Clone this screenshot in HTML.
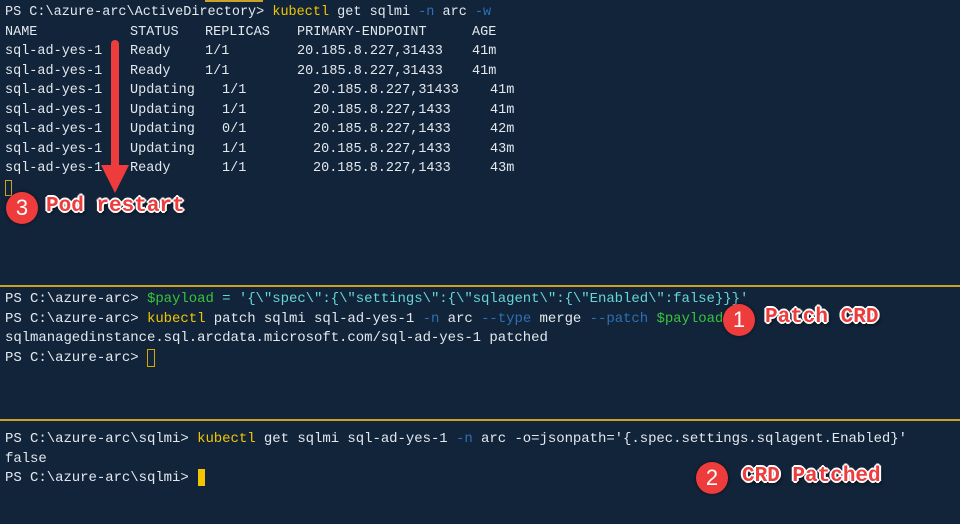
<!DOCTYPE html>
<html><head><style>
body{margin:0;width:960px;height:524px;background:#12243a;overflow:hidden;position:relative;font-family:"Liberation Mono",monospace;color:#e3e8ee}
.r{position:absolute;left:0;height:19.5px;font-size:13.5px;line-height:19.5px;white-space:pre}
.r span{position:absolute;top:0}
.b{position:absolute;left:5px;white-space:pre;font-size:14px;line-height:19.5px;letter-spacing:-0.05px}
.y{color:#f2c500}.f{color:#2f6fb4}.s{color:#63d6d6}.g{color:#38c43b}
.hl{position:absolute;left:0;width:960px;height:2px;background:#c9a227}
.c{position:absolute;width:32px;height:32px;border-radius:50%;background:#ee3b3b;color:#fff;font:22px/32px "Liberation Sans",sans-serif;text-align:center;box-shadow:0 0 3px rgba(0,0,0,.6)}
.a{position:absolute;color:#ee3b3b;font:bold 21px "Liberation Mono",monospace;white-space:pre;text-shadow:-1px -1px 0 #fff,1px -1px 0 #fff,-1px 1px 0 #fff,1px 1px 0 #fff,0 2px 0 #fff,2px 0 0 #fff,-2px 0 0 #fff,0 -2px 0 #fff,2px 3px 3px rgba(0,0,0,.6)}
</style></head><body>
<div style="position:absolute;left:205px;top:0;width:58px;height:2px;background:#c9a227"></div>
<div class="r" style="top:3px;left:5px">PS C:\azure-arc\ActiveDirectory> <span class="y" style="position:static">kubectl</span> get sqlmi <span class="f" style="position:static">-n</span> arc <span class="f" style="position:static">-w</span></div>
<div class="r" style="top:23px"><span style="left:5px">NAME</span><span style="left:130px">STATUS</span><span style="left:205px">REPLICAS</span><span style="left:297px">PRIMARY-ENDPOINT</span><span style="left:472px">AGE</span></div>
<div class="r" style="top:42px"><span style="left:5px">sql-ad-yes-1</span><span style="left:130px">Ready</span><span style="left:205px">1/1</span><span style="left:297px">20.185.8.227,31433</span><span style="left:472px">41m</span></div>
<div class="r" style="top:62px"><span style="left:5px">sql-ad-yes-1</span><span style="left:130px">Ready</span><span style="left:205px">1/1</span><span style="left:297px">20.185.8.227,31433</span><span style="left:472px">41m</span></div>
<div class="r" style="top:81px"><span style="left:5px">sql-ad-yes-1</span><span style="left:130px">Updating</span><span style="left:222px">1/1</span><span style="left:313px">20.185.8.227,31433</span><span style="left:490px">41m</span></div>
<div class="r" style="top:101px"><span style="left:5px">sql-ad-yes-1</span><span style="left:130px">Updating</span><span style="left:222px">1/1</span><span style="left:313px">20.185.8.227,1433</span><span style="left:490px">41m</span></div>
<div class="r" style="top:120px"><span style="left:5px">sql-ad-yes-1</span><span style="left:130px">Updating</span><span style="left:222px">0/1</span><span style="left:313px">20.185.8.227,1433</span><span style="left:490px">42m</span></div>
<div class="r" style="top:140px"><span style="left:5px">sql-ad-yes-1</span><span style="left:130px">Updating</span><span style="left:222px">1/1</span><span style="left:313px">20.185.8.227,1433</span><span style="left:490px">43m</span></div>
<div class="r" style="top:159px"><span style="left:5px">sql-ad-yes-1</span><span style="left:130px">Ready</span><span style="left:222px">1/1</span><span style="left:313px">20.185.8.227,1433</span><span style="left:490px">43m</span></div>
<div style="position:absolute;left:5px;top:180px;width:5px;height:14px;border:1px solid #c9a227"></div>
<svg style="position:absolute;left:100px;top:38px" width="30" height="156"><rect x="11" y="2" width="8" height="130" rx="4" fill="#ee3b3b"/><polygon points="1,127 29,127 15,155" fill="#ee3b3b"/></svg>
<div class="c" style="left:6px;top:192px">3</div>
<div class="a" style="left:46px;top:195px">Pod restart</div>
<div class="hl" style="top:285px"></div>
<div class="b" style="top:290px">PS C:\azure-arc> <span class="g">$payload</span> <span class="s">= '{\"spec\":{\"settings\":{\"sqlagent\":{\"Enabled\":false}}}'</span>
PS C:\azure-arc> <span class="y">kubectl</span> patch sqlmi sql-ad-yes-1 <span class="f">-n</span> arc <span class="f">--type</span> merge <span class="f">--patch</span> <span class="g">$payload</span>
sqlmanagedinstance.sql.arcdata.microsoft.com/sql-ad-yes-1 patched
PS C:\azure-arc> </div>
<div style="position:absolute;left:147px;top:349px;width:6px;height:16px;border:1px solid #d9a800"></div>
<div class="c" style="left:723px;top:304px">1</div>
<div class="a" style="left:765px;top:306px">Patch CRD</div>
<div class="hl" style="top:419px"></div>
<div class="b" style="top:430px">PS C:\azure-arc\sqlmi> <span class="y">kubectl</span> get sqlmi sql-ad-yes-1 <span class="f">-n</span> arc -o=jsonpath='{.spec.settings.sqlagent.Enabled}'
false
PS C:\azure-arc\sqlmi> </div>
<div style="position:absolute;left:198px;top:469px;width:7px;height:17px;background:#f2c500"></div>
<div class="c" style="left:696px;top:462px">2</div>
<div class="a" style="left:742px;top:465px">CRD Patched</div>
</body></html>
